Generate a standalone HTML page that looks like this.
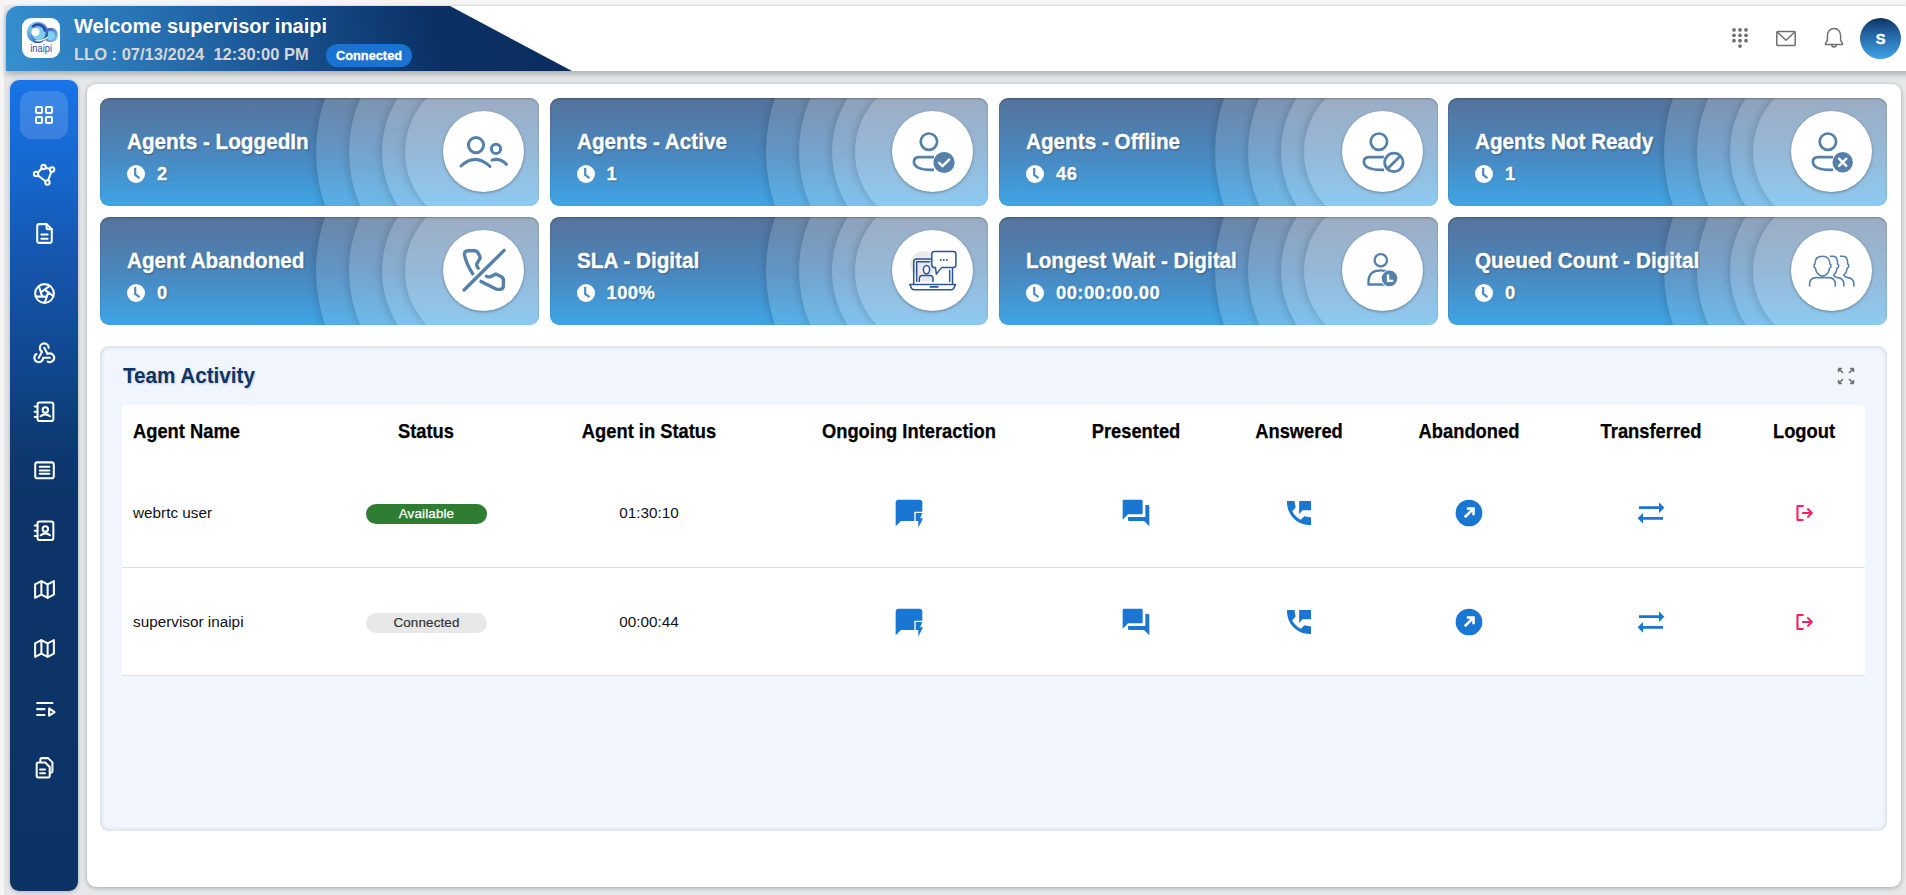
<!DOCTYPE html>
<html><head><meta charset="utf-8"><title>Dashboard</title>
<style>
*{box-sizing:border-box;margin:0;padding:0}
html,body{width:1906px;height:895px;overflow:hidden}
body{background:#f5f5f5;font-family:"Liberation Sans",sans-serif;position:relative}
.shell{position:absolute;left:6px;top:6px;width:1910px;height:900px;background:#e7e8ea;box-shadow:-1px 0 2px rgba(0,0,0,.12)}
.topbar{position:absolute;left:6px;top:6px;width:1910px;height:65px;background:#fff;border-top-left-radius:12px;border-top-right-radius:12px;box-shadow:0 3px 6px rgba(0,0,0,.28)}
.hdr{position:absolute;left:0;top:0;width:566px;height:65px;border-top-left-radius:12px;
 background:linear-gradient(78deg,#3690d0 0%,#2873b4 25%,#17508f 50%,#0b3164 75%,#0a2d5e 100%);
 clip-path:polygon(0 0,444px 0,566px 65px,0 65px)}
.logo{position:absolute;left:16px;top:12px;width:38px;height:40px;background:#fff;border-radius:9px}
.welcome{position:absolute;left:68px;top:8px;color:#fff;font-weight:bold;font-size:20px;line-height:24px;white-space:nowrap;text-shadow:0 0 1px rgba(0,0,0,.2)}
.llo{position:absolute;left:68px;top:38px;color:#d6d6d6;font-weight:bold;font-size:16.5px;line-height:20px;white-space:nowrap}
.conn{position:absolute;left:320px;top:38px;width:86px;height:23px;border-radius:12px;background:#1a73d0;color:#fff;font-weight:bold;font-size:12.8px;line-height:24.5px;text-align:center;-webkit-text-stroke:.3px #fff}
.ticons{position:absolute;left:0;top:0}
.avatar{position:absolute;left:1860px;top:18px;width:41px;height:41px;border-radius:50%;background:linear-gradient(180deg,#0d3466 0%,#2a70b0 50%,#3ea3e6 100%);color:#fff;font-weight:bold;font-size:14.5px;line-height:42px;text-align:center;-webkit-text-stroke:0.5px #fff}
.sidebar{position:absolute;left:10px;top:80px;width:68px;height:811px;border-radius:9px;background:linear-gradient(180deg,#1874e8 0%,#1666cc 12%,#1556ae 22%,#114a93 33%,#0d3b74 44%,#0c3468 52%,#0b3366 100%);box-shadow:0 1px 4px rgba(0,0,0,.25)}
.sb-active{position:absolute;left:10px;top:11px;width:48px;height:48px;border-radius:12px;background:rgba(255,255,255,.15)}
.sbi{position:absolute;left:22px;width:24px;height:24px}
.main{position:absolute;left:87px;top:84px;width:1814px;height:803px;background:#fff;border-radius:9px;box-shadow:0 1px 5px rgba(0,0,0,.3)}
.card{position:absolute;width:438.5px;height:108px;border-radius:9px;overflow:hidden;
 background:linear-gradient(180deg,#55739a 0%,#4a86bd 50%,#3ea5e6 100%)}
.card::after{content:"";position:absolute;inset:0;border-radius:9px;box-shadow:inset 0 1px 2px rgba(0,0,0,.25);pointer-events:none}
.ring{position:absolute;border-radius:50%;background:rgba(255,255,255,.13);box-shadow:-3px 0 6px rgba(0,0,0,.12)}
.ic{position:absolute;width:81px;height:81px;border-radius:50%;background:#fff;box-shadow:0 1px 3px rgba(0,0,0,.35)}
.ic svg{position:absolute;left:0;top:0}
.ctitle{position:absolute;left:27px;top:31.5px;color:#fff;font-weight:bold;font-size:22.5px;line-height:26px;transform:scaleX(.92);-webkit-text-stroke:.35px #fff;transform-origin:0 0;white-space:nowrap;text-shadow:1px 1px 2px rgba(0,0,0,.35)}
.cval{position:absolute;left:27px;top:65px;height:22px;color:#fff;font-weight:bold;font-size:18.4px;letter-spacing:.45px;-webkit-text-stroke:.3px #fff;line-height:22px;white-space:nowrap;text-shadow:1px 1px 2px rgba(0,0,0,.3)}
.cval svg{position:absolute;left:0;top:2px}
.cval span{position:absolute;left:30px;top:0}
.panel{position:absolute;left:13px;top:262px;width:1787px;height:485px;background:#f1f5fd;border-radius:9px;box-shadow:inset 0 0 5px rgba(0,0,0,.17)}
.ptitle{position:absolute;left:23px;top:17px;color:#0d3566;font-weight:bold;font-size:21.5px;line-height:26px;transform:scaleX(.96);transform-origin:0 0;text-shadow:1px 1px 2px rgba(0,0,0,.2)}
.tbl{position:absolute;left:22px;top:59px;width:1743px;height:271px;background:#fff}
.th{position:absolute;font-weight:bold;font-size:19.3px;line-height:22px;transform:scaleX(.95);-webkit-text-stroke:.25px #000;color:#000;white-space:nowrap;text-align:center;width:240px}
.td{position:absolute;font-size:15.3px;line-height:20px;color:#111;white-space:nowrap;text-align:center;width:240px}
.hr{position:absolute;left:0;width:1743px;height:1px;background:#e0e0e0}
.badge{position:absolute;width:121px;height:20px;border-radius:10px;font-size:13.4px;line-height:20px;text-align:center}
.avail{background:#2e7d32;color:#fff;-webkit-text-stroke:.25px #fff;letter-spacing:.15px}
.connb{background:#e8e8e8;color:#333;-webkit-text-stroke:.2px #333;letter-spacing:.15px}
.ti{position:absolute;width:32px;height:32px}

</style></head><body>
<div class="shell"></div>
<div class="topbar">
 <div class="hdr">
  <div class="logo"><svg width="38" height="40" viewBox="0 0 38 40">
<defs><linearGradient id="lga" x1="0.1" y1="0.1" x2="0.9" y2="0.9"><stop offset="0" stop-color="#8ad8f0"/><stop offset="0.5" stop-color="#4f8fd4"/><stop offset="1" stop-color="#2b3aa2"/></linearGradient>
<linearGradient id="lgb" x1="0" y1="0" x2="1" y2="1"><stop offset="0" stop-color="#2f46aa"/><stop offset="1" stop-color="#86d4ef"/></linearGradient></defs>
<circle cx="28.6" cy="17" r="7.3" fill="url(#lgb)"/>
<circle cx="28.4" cy="17.6" r="4.6" fill="#7fd0ee"/>
<circle cx="15.5" cy="14.4" r="10.7" fill="url(#lga)"/>
<circle cx="17" cy="15.6" r="6.6" fill="#7ccfe9"/>
<path d="M10.2 9 A7.2 7.2 0 0 1 22.8 13.5" stroke="#3040a6" stroke-width="2.4" fill="none"/>
<circle cx="13.4" cy="14" r="4.1" fill="#fff"/>
<path d="M13.5 22.3 Q20 24.2 25.5 19.2" stroke="#fff" stroke-width="1.1" fill="none"/>
<text x="8.2" y="33.7" font-family="Liberation Sans" font-size="11.5" fill="#3a46a2" textLength="21.8" lengthAdjust="spacingAndGlyphs">inaipi</text>
</svg></div>
  <div class="welcome">Welcome supervisor inaipi</div>
  <div class="llo">LLO : 07/13/2024&nbsp;&nbsp;12:30:00 PM</div>
  <div class="conn">Connected</div>
 </div>
</div>
<div class="ticons"><svg style="position:absolute;left:1732px;top:28.1px" width="17" height="21" viewBox="0 0 17 21"><g fill="#6f6f6f"><circle cx="2" cy="1.9" r="1.85"/><circle cx="8" cy="1.9" r="1.85"/><circle cx="14" cy="1.9" r="1.85"/><circle cx="2" cy="7.3" r="1.85"/><circle cx="8" cy="7.3" r="1.85"/><circle cx="14" cy="7.3" r="1.85"/><circle cx="2" cy="12.7" r="1.85"/><circle cx="8" cy="12.7" r="1.85"/><circle cx="14" cy="12.7" r="1.85"/><circle cx="8" cy="18.1" r="1.85"/></g></svg>
<svg style="position:absolute;left:1775px;top:29.5px" width="22" height="18" viewBox="0 0 22 18"><rect x="1.8" y="1.6" width="18.4" height="14" rx="0.8" fill="none" stroke="#707070" stroke-width="1.5"/><path d="M2.2 2 L11 10.2 L19.8 2" fill="none" stroke="#707070" stroke-width="1.5"/></svg>
<svg style="position:absolute;left:1823px;top:27px" width="22" height="22" viewBox="0 0 22 22"><path d="M3.2 17.6 H18.8 c.7 0 1 -.7 .6 -1.3 L17.6 13.2 V8.4 c0 -4 -2.8 -7 -6.6 -7 S4.4 4.4 4.4 8.4 V13.2 L2.6 16.3 c-.4 .6 -.1 1.3 .6 1.3z" fill="none" stroke="#707070" stroke-width="1.5" stroke-linejoin="round"/><path d="M8.8 17.8 a2.2 2.2 0 0 0 4.4 0" fill="none" stroke="#707070" stroke-width="1.5"/></svg>
<div class="avatar">S</div></div>
<div class="sidebar">
 <div class="sb-active"></div>
 <svg class="sbi" style="top:23.30px;left:22.30px;width:24px;height:24px" viewBox="0 0 24 24" fill="none" stroke="#fff" stroke-width="1.95" stroke-linecap="round" stroke-linejoin="round"><rect x="4" y="4" width="6" height="6" rx="1"/><rect x="14" y="4" width="6" height="6" rx="1"/><rect x="4" y="14" width="6" height="6" rx="1"/><rect x="14" y="14" width="6" height="6" rx="1"/></svg><svg class="sbi" style="top:82.07px;left:21.80px;width:25px;height:25px" viewBox="0 0 24 24" fill="none" stroke="#fff" stroke-width="1.95" stroke-linecap="round" stroke-linejoin="round"><circle cx="11.1" cy="4.8" r="2.1"/><circle cx="19.3" cy="7.2" r="2.1"/><circle cx="3.9" cy="11.5" r="2.1"/><circle cx="14.8" cy="19.7" r="2.1"/><path d="M5.6 10l3.8 -3.7M13.1 5.5l4.2 1.2M18.6 9.2l-3.1 8.5M13 18.5l-7.3 -5.6"/></svg><svg class="sbi" style="top:141.34px;left:21.80px;width:25px;height:25px" viewBox="0 0 24 24" fill="none" stroke="#fff" stroke-width="1.95" stroke-linecap="round" stroke-linejoin="round"><path d="M14 3v4a1 1 0 0 0 1 1h4"/><path d="M17 21h-10a2 2 0 0 1 -2 -2v-14a2 2 0 0 1 2 -2h7l5 5v11a2 2 0 0 1 -2 2z"/><path d="M9 13h6M9 17h6"/></svg><svg class="sbi" style="top:200.61px;left:21.80px;width:25px;height:25px" viewBox="0 0 24 24" fill="none" stroke="#fff" stroke-width="1.95" stroke-linecap="round" stroke-linejoin="round"><circle cx="12" cy="12" r="9"/><path d="M3.6 15h10.55M6.551 4.938l3.26 10.034M17.032 4.636l-8.535 6.201M20.559 14.51l-8.535 -6.201M12.257 20.916l3.261 -10.034"/></svg><svg class="sbi" style="top:259.13px;left:21.05px;width:26.5px;height:26.5px" viewBox="0 0 24 24" fill="none" stroke="#fff" stroke-width="1.95" stroke-linecap="round" stroke-linejoin="round"><path d="M4.876 13.61a4 4 0 1 0 6.124 3.39h6"/><path d="M15.066 20.502a4 4 0 1 0 1.934 -7.502c-.706 0 -1.424 .179 -2 .5l-3 -5.5"/><path d="M16 8a4 4 0 1 0 -8 0c0 1.506 .77 2.818 2 3.5l-3 5.5"/></svg><svg class="sbi" style="top:319.15px;left:21.80px;width:25px;height:25px" viewBox="0 0 24 24" fill="none" stroke="#fff" stroke-width="1.95" stroke-linecap="round" stroke-linejoin="round"><rect x="5.3" y="3.3" width="15.2" height="17.8" rx="2"/><path d="M2.6 7.3h2.6M2.6 12.2h2.6M2.6 17.3h2.6"/><circle cx="12.8" cy="10.6" r="2.6"/><path d="M8.3 16.6q4.5 -3.6 9 0"/></svg><svg class="sbi" style="top:378.42px;left:21.80px;width:25px;height:25px" viewBox="0 0 24 24" fill="none" stroke="#fff" stroke-width="1.95" stroke-linecap="round" stroke-linejoin="round"><rect x="3.1" y="4.2" width="17.8" height="15.2" rx="2"/><path d="M7.4 8.5h9.3M7.4 11.9h9.3M7.4 15.2h9.3"/></svg><svg class="sbi" style="top:437.69px;left:21.80px;width:25px;height:25px" viewBox="0 0 24 24" fill="none" stroke="#fff" stroke-width="1.95" stroke-linecap="round" stroke-linejoin="round"><rect x="5.3" y="3.3" width="15.2" height="17.8" rx="2"/><path d="M2.6 7.3h2.6M2.6 12.2h2.6M2.6 17.3h2.6"/><circle cx="12.8" cy="10.6" r="2.6"/><path d="M8.3 16.6q4.5 -3.6 9 0"/></svg><svg class="sbi" style="top:496.96px;left:21.80px;width:25px;height:25px" viewBox="0 0 24 24" fill="none" stroke="#fff" stroke-width="1.95" stroke-linecap="round" stroke-linejoin="round"><path d="M3 7l6 -3l6 3l6 -3v13l-6 3l-6 -3l-6 3v-13"/><path d="M9 4v13M15 7v13"/></svg><svg class="sbi" style="top:556.23px;left:21.80px;width:25px;height:25px" viewBox="0 0 24 24" fill="none" stroke="#fff" stroke-width="1.95" stroke-linecap="round" stroke-linejoin="round"><path d="M3 7l6 -3l6 3l6 -3v13l-6 3l-6 -3l-6 3v-13"/><path d="M9 4v13M15 7v13"/></svg><svg class="sbi" style="top:615.50px;left:21.80px;width:25px;height:25px" viewBox="0 0 24 24" fill="none" stroke="#fff" stroke-width="1.95" stroke-linecap="round" stroke-linejoin="round"><path d="M4.9 6.8h14.8M4.9 12.6h7.1M4.9 18.2h7.1"/><path d="M16.4 11.9l5.3 3.5l-5.3 3.5z"/></svg><svg class="sbi" style="top:674.77px;left:21.80px;width:25px;height:25px" viewBox="0 0 24 24" fill="none" stroke="#fff" stroke-width="1.95" stroke-linecap="round" stroke-linejoin="round"><path d="M8 6.8V4.5a1.5 1.5 0 0 1 1.5 -1.5H15.5L19.6 7.1V15.6a1.5 1.5 0 0 1 -1.5 1.5H17.3"/><path d="M6 7.2H12.7L17 11.5V20a1.5 1.5 0 0 1 -1.5 1.5H6a1.5 1.5 0 0 1 -1.5 -1.5V8.7a1.5 1.5 0 0 1 1.5 -1.5z"/><path d="M7.8 14h4.7M7.8 17.6h4.7"/></svg>
</div>
<div class="main">
 <div class="card" style="left:13px;top:13.5px"><div class="ring" style="left:216.0px;top:-113px;width:334px;height:334px"></div><div class="ring" style="left:249.0px;top:-80px;width:268px;height:268px"></div><div class="ring" style="left:282.0px;top:-47px;width:202px;height:202px"></div><div class="ring" style="left:305.0px;top:-24px;width:156px;height:156px"></div><div class="ic" style="left:342.5px;top:13.5px"><svg width="81" height="81" viewBox="-40.5 -40.5 81 81"><g fill="none" stroke="#5580aa" stroke-width="3" stroke-linecap="round"><circle cx="-7.5" cy="-6.4" r="7.6"/><circle cx="12.5" cy="-2.6" r="4.6"/><path d="M-22.5 14.5 Q-8 1 6.5 15"/><path d="M8.5 8.6 Q16 6 23 12.8"/></g></svg></div><div class="ctitle">Agents - LoggedIn</div><div class="cval"><svg width="18" height="18" viewBox="0 0 18 18"><circle cx="9" cy="9" r="9" fill="#fff"/><path d="M8.2 4.2 V10 L11.6 12.4" fill="none" stroke="#4a8ac2" stroke-width="2.2" stroke-linecap="square"/></svg><span>2</span></div></div><div class="card" style="left:462.5px;top:13.5px"><div class="ring" style="left:216.0px;top:-113px;width:334px;height:334px"></div><div class="ring" style="left:249.0px;top:-80px;width:268px;height:268px"></div><div class="ring" style="left:282.0px;top:-47px;width:202px;height:202px"></div><div class="ring" style="left:305.0px;top:-24px;width:156px;height:156px"></div><div class="ic" style="left:342.5px;top:13.5px"><svg width="81" height="81" viewBox="-40.5 -40.5 81 81"><circle cx="-3.6" cy="-9.8" r="8.2" fill="none" stroke="#5580aa" stroke-width="2.7"/><path d="M1.5 5.6 H-13.5 C-17.3 5.6 -18.6 8 -18.6 10.6 C-18.6 15.6 -11.5 18.4 -2 18.4 H1.5" fill="none" stroke="#5580aa" stroke-width="2.7"/><circle cx="11.6" cy="11" r="11.2" fill="#fff"/><circle cx="11.6" cy="11" r="10.6" fill="#5580aa"/><path d="M6.6 11.3l3.4 3.4 6.6 -6.6" fill="none" stroke="#fff" stroke-width="2.4" stroke-linecap="round" stroke-linejoin="round"/></svg></div><div class="ctitle">Agents - Active</div><div class="cval"><svg width="18" height="18" viewBox="0 0 18 18"><circle cx="9" cy="9" r="9" fill="#fff"/><path d="M8.2 4.2 V10 L11.6 12.4" fill="none" stroke="#4a8ac2" stroke-width="2.2" stroke-linecap="square"/></svg><span>1</span></div></div><div class="card" style="left:912px;top:13.5px"><div class="ring" style="left:216.0px;top:-113px;width:334px;height:334px"></div><div class="ring" style="left:249.0px;top:-80px;width:268px;height:268px"></div><div class="ring" style="left:282.0px;top:-47px;width:202px;height:202px"></div><div class="ring" style="left:305.0px;top:-24px;width:156px;height:156px"></div><div class="ic" style="left:342.5px;top:13.5px"><svg width="81" height="81" viewBox="-40.5 -40.5 81 81"><circle cx="-3.6" cy="-9.8" r="8.2" fill="none" stroke="#5580aa" stroke-width="2.7"/><path d="M1.5 5.6 H-13.5 C-17.3 5.6 -18.6 8 -18.6 10.6 C-18.6 15.6 -11.5 18.4 -2 18.4 H1.5" fill="none" stroke="#5580aa" stroke-width="2.7"/><circle cx="11.4" cy="10.9" r="11.2" fill="#fff"/><circle cx="11.4" cy="10.9" r="9.2" fill="none" stroke="#5580aa" stroke-width="2.8"/><path d="M5 17.3 L17.8 4.5" stroke="#5580aa" stroke-width="2.8"/></svg></div><div class="ctitle">Agents - Offline</div><div class="cval"><svg width="18" height="18" viewBox="0 0 18 18"><circle cx="9" cy="9" r="9" fill="#fff"/><path d="M8.2 4.2 V10 L11.6 12.4" fill="none" stroke="#4a8ac2" stroke-width="2.2" stroke-linecap="square"/></svg><span>46</span></div></div><div class="card" style="left:1361px;top:13.5px"><div class="ring" style="left:216.0px;top:-113px;width:334px;height:334px"></div><div class="ring" style="left:249.0px;top:-80px;width:268px;height:268px"></div><div class="ring" style="left:282.0px;top:-47px;width:202px;height:202px"></div><div class="ring" style="left:305.0px;top:-24px;width:156px;height:156px"></div><div class="ic" style="left:342.5px;top:13.5px"><svg width="81" height="81" viewBox="-40.5 -40.5 81 81"><circle cx="-3.6" cy="-9.8" r="8.2" fill="none" stroke="#5580aa" stroke-width="2.7"/><path d="M1.5 5.6 H-13.5 C-17.3 5.6 -18.6 8 -18.6 10.6 C-18.6 15.6 -11.5 18.4 -2 18.4 H1.5" fill="none" stroke="#5580aa" stroke-width="2.7"/><circle cx="11.2" cy="10.8" r="10.8" fill="#fff"/><circle cx="11.2" cy="10.8" r="10.2" fill="#5580aa"/><path d="M7.6 7.2l7.2 7.2M14.8 7.2l-7.2 7.2" stroke="#fff" stroke-width="2.4" stroke-linecap="round"/></svg></div><div class="ctitle">Agents Not Ready</div><div class="cval"><svg width="18" height="18" viewBox="0 0 18 18"><circle cx="9" cy="9" r="9" fill="#fff"/><path d="M8.2 4.2 V10 L11.6 12.4" fill="none" stroke="#4a8ac2" stroke-width="2.2" stroke-linecap="square"/></svg><span>1</span></div></div><div class="card" style="left:13px;top:132.5px"><div class="ring" style="left:216.0px;top:-113px;width:334px;height:334px"></div><div class="ring" style="left:249.0px;top:-80px;width:268px;height:268px"></div><div class="ring" style="left:282.0px;top:-47px;width:202px;height:202px"></div><div class="ring" style="left:305.0px;top:-24px;width:156px;height:156px"></div><div class="ic" style="left:342.5px;top:13.5px"><svg width="81" height="81" viewBox="-40.5 -40.5 81 81"><g fill="none" stroke="#5580aa" stroke-width="3.4" stroke-linecap="round" stroke-linejoin="round"><path d="M-19.4 19.5 L20.6 -20.1"/><path d="M-5.3 -2.3 Q-7.5 -5 -6.5 -7 L-3.6 -12 Q-3 -13 -4 -15 L-6 -18.5 Q-7 -19.8 -9 -19.8 H-15.5 Q-19.5 -19.5 -19 -15.5 Q-17 -6 -10.8 3.2"/><path d="M3 5.7 Q5 6.8 7 6.2 L12.3 3.5 L17.5 6 Q19.8 7.2 19.9 9.5 V15.5 Q19.8 19 16.3 18.9 Q14 18.9 12 18.3 L-2.5 10.9"/></g></svg></div><div class="ctitle">Agent Abandoned</div><div class="cval"><svg width="18" height="18" viewBox="0 0 18 18"><circle cx="9" cy="9" r="9" fill="#fff"/><path d="M8.2 4.2 V10 L11.6 12.4" fill="none" stroke="#4a8ac2" stroke-width="2.2" stroke-linecap="square"/></svg><span>0</span></div></div><div class="card" style="left:462.5px;top:132.5px"><div class="ring" style="left:216.0px;top:-113px;width:334px;height:334px"></div><div class="ring" style="left:249.0px;top:-80px;width:268px;height:268px"></div><div class="ring" style="left:282.0px;top:-47px;width:202px;height:202px"></div><div class="ring" style="left:305.0px;top:-24px;width:156px;height:156px"></div><div class="ic" style="left:342.5px;top:13.5px"><svg width="81" height="81" viewBox="-40.5 -40.5 81 81"><circle cx="-9.2" cy="-6.2" r="13" fill="#e8e9eb"/><g fill="none" stroke="#2b5592" stroke-width="1.5" stroke-linejoin="round" stroke-linecap="round"><path d="M-18.8 13.9 V-8.5 a3 3 0 0 1 3 -3 H-1.2"/><path d="M-15.8 11.1 V-8.7 H-2.9"/><path d="M20 13.9 V-2.9"/><path d="M17.2 11.1 V-0.1"/><path d="M-13.2 11.1 V8 a3 3 0 0 1 3 -3 h7.7 a3 3 0 0 1 3 3 V11.1" fill="#e8e9eb"/><ellipse cx="-6" cy="-0.9" rx="3.1" ry="4.2" fill="#fff"/><path d="M-22.7 13.9 H23.1 L21.5 17.4 Q20.7 19.2 18.9 19.2 H-18.6 Q-20.4 19.2 -21.2 17.4 Z" fill="#fff"/><path d="M-2.1 16.4 H5.2" stroke-width="1.8"/><path d="M1.8 -19.1 H20.9 a2.5 2.5 0 0 1 2.5 2.5 V-5.4 a2.5 2.5 0 0 1 -2.5 2.5 H9.1 L3.8 3.6 L3 -2.9 H1.8 a2.5 2.5 0 0 1 -2.5 -2.5 V-16.6 a2.5 2.5 0 0 1 2.5 -2.5 Z" fill="#fff"/></g><g fill="#2b5592"><circle cx="8.3" cy="-10.5" r="0.95"/><circle cx="11.3" cy="-10.5" r="0.95"/><circle cx="14.4" cy="-10.5" r="0.95"/></g></svg></div><div class="ctitle">SLA - Digital</div><div class="cval"><svg width="18" height="18" viewBox="0 0 18 18"><circle cx="9" cy="9" r="9" fill="#fff"/><path d="M8.2 4.2 V10 L11.6 12.4" fill="none" stroke="#4a8ac2" stroke-width="2.2" stroke-linecap="square"/></svg><span>100%</span></div></div><div class="card" style="left:912px;top:132.5px"><div class="ring" style="left:216.0px;top:-113px;width:334px;height:334px"></div><div class="ring" style="left:249.0px;top:-80px;width:268px;height:268px"></div><div class="ring" style="left:282.0px;top:-47px;width:202px;height:202px"></div><div class="ring" style="left:305.0px;top:-24px;width:156px;height:156px"></div><div class="ic" style="left:342.5px;top:13.5px"><svg width="81" height="81" viewBox="-40.5 -40.5 81 81"><g fill="none" stroke="#5580aa" stroke-width="2.3"><circle cx="-1.7" cy="-10.2" r="6.2"/><path d="M6 1.6 Q2.5 -0.2 -2 -0.2 Q-14 0 -14 11 V14 H3"/></g><circle cx="7" cy="7.9" r="8.6" fill="#fff"/><circle cx="7" cy="7.9" r="7.8" fill="#5580aa"/><path d="M5.6 4.1 V10.4 H10.7" fill="none" stroke="#fff" stroke-width="2.4"/></svg></div><div class="ctitle">Longest Wait - Digital</div><div class="cval"><svg width="18" height="18" viewBox="0 0 18 18"><circle cx="9" cy="9" r="9" fill="#fff"/><path d="M8.2 4.2 V10 L11.6 12.4" fill="none" stroke="#4a8ac2" stroke-width="2.2" stroke-linecap="square"/></svg><span>00:00:00.00</span></div></div><div class="card" style="left:1361px;top:132.5px"><div class="ring" style="left:216.0px;top:-113px;width:334px;height:334px"></div><div class="ring" style="left:249.0px;top:-80px;width:268px;height:268px"></div><div class="ring" style="left:282.0px;top:-47px;width:202px;height:202px"></div><div class="ring" style="left:305.0px;top:-24px;width:156px;height:156px"></div><div class="ic" style="left:342.5px;top:13.5px"><svg width="81" height="81" viewBox="-40.5 -40.5 81 81"><g fill="none" stroke="#5580aa" stroke-width="1.6" stroke-linecap="round" stroke-linejoin="round"><path d="M-21.9 15.5 v-2.4 a6 6 0 0 1 6 -6 h13.7 a6 6 0 0 1 6 6 v2.4"/><path d="M-9 5.6 c-4 0 -6.6 -4 -7.1 -8 c-1.6 -.2 -2.1 -3.6 -.4 -4.2 c0 -5 3 -7.6 7.5 -7.6 c4.5 0 7.5 2.6 7.5 7.6 c1.7 .6 1.2 4 -.4 4.2 c-.5 4 -3.1 8 -7.1 8z"/><path d="M-1 -14.2 h2.5 c3.2 0 4.6 3 4.6 7.6 c1.7 .6 1.2 4 -.4 4.2 c-.5 3.2 -1.8 5.6 -3.6 7.2 c.9 1.2 2.4 2.3 4.2 2.3 a6 6 0 0 1 6 6 v2.4"/><path d="M9.1 -14.2 h2.5 c3.2 0 4.6 3 4.6 7.6 c1.7 .6 1.2 4 -.4 4.2 c-.5 3.2 -1.8 5.6 -3.6 7.2 c.9 1.2 2.4 2.3 4.2 2.3 a6 6 0 0 1 6 6 v2.4"/></g></svg></div><div class="ctitle">Queued Count - Digital</div><div class="cval"><svg width="18" height="18" viewBox="0 0 18 18"><circle cx="9" cy="9" r="9" fill="#fff"/><path d="M8.2 4.2 V10 L11.6 12.4" fill="none" stroke="#4a8ac2" stroke-width="2.2" stroke-linecap="square"/></svg><span>0</span></div></div>
 <div class="panel">
  <div class="ptitle">Team Activity</div>
  <svg style="position:absolute;left:1737px;top:21px" width="18" height="18" viewBox="0 0 18 18"><g fill="none" stroke="#6d6d6d" stroke-width="1.5"><path d="M1.5 1.5 L6 6 M1.5 1.5 H5 M1.5 1.5 V5"/><path d="M16.5 1.5 L12 6 M16.5 1.5 H13 M16.5 1.5 V5"/><path d="M1.5 16.5 L6 12 M1.5 16.5 H5 M1.5 16.5 V13"/><path d="M16.5 16.5 L12 12 M16.5 16.5 H13 M16.5 16.5 V13"/></g></svg>
  <div class="tbl"><div class="th" style="left:11px;top:16px;text-align:left;transform-origin:0 0">Agent Name</div><div class="th" style="left:184px;top:16px">Status</div><div class="th" style="left:407px;top:16px">Agent in Status</div><div class="th" style="left:667px;top:16px">Ongoing Interaction</div><div class="th" style="left:894px;top:16px">Presented</div><div class="th" style="left:1057px;top:16px">Answered</div><div class="th" style="left:1227px;top:16px">Abandoned</div><div class="th" style="left:1409px;top:16px">Transferred</div><div class="th" style="left:1562px;top:16px">Logout</div><div class="td" style="left:11px;top:98px;text-align:left">webrtc user</div><div class="badge avail" style="left:244px;top:99px">Available</div><div class="td" style="left:407px;top:98px">01:30:10</div><svg class="ti" style="left:771px;top:92px" viewBox="0 0 24 24"><path fill="#1976d2" d="M22 4c0-1.1-.9-2-2-2H4C2.9 2 2.01 2.9 2.01 4L2 22l4-4h10v-7h6V4z"/><path fill="#1976d2" d="M22.5 16h-2.2l1.7-4h-5v6h2v5z"/></svg><svg class="ti" style="left:998px;top:92px" viewBox="0 0 24 24"><path fill="#1976d2" d="M21 6h-2v9H6v2c0 .55.45 1 1 1h11l4 4V7c0-.55-.45-1-1-1zm-4 6V3c0-.55-.45-1-1-1H3c-.55 0-1 .45-1 1v14l4-4h10c.55 0 1-.45 1-1z"/></svg><svg class="ti" style="left:1161px;top:92px" viewBox="0 0 24 24"><path fill="#1976d2" d="M3 3h5.6l.9 4.9-2.6 2.7c1.4 2.8 3.7 5.1 6.5 6.5l2.6-2.6 5 .9V21h-1C10.6 21 3 13.4 3 4z"/><path fill="#1976d2" d="M12.1 3H21v6.9h-6.3l-2.6 2.9z"/></svg><svg class="ti" style="left:1331px;top:92px" viewBox="0 0 24 24"><circle cx="12" cy="12" r="10" fill="#1976d2"/><path d="M8.8 15.2 L15.2 8.8 M10.4 8.6 H15.4 V13.6" fill="none" stroke="#fff" stroke-width="1.9"/></svg><svg class="ti" style="left:1513px;top:92px" viewBox="0 0 24 24"><path fill="#1976d2" d="M22 8l-4-4v3H3v2h15v3l4-4zM2 16l4 4v-3h15v-2H6v-3l-4 4z"/></svg><svg class="ti" style="left:1666px;top:92px" viewBox="0 0 24 24"><g fill="none" stroke="#ff1f5a" stroke-width="1.55" stroke-linecap="round" stroke-linejoin="round"><path d="M11.1 6.7 H7.1 V17.3 H11.1"/><path d="M11.2 12 H17.9 M15 9.1 L17.9 12 L15 14.9"/></g></svg><div class="td" style="left:11px;top:207px;text-align:left">supervisor inaipi</div><div class="badge connb" style="left:244px;top:208px">Connected</div><div class="td" style="left:407px;top:207px">00:00:44</div><svg class="ti" style="left:771px;top:201px" viewBox="0 0 24 24"><path fill="#1976d2" d="M22 4c0-1.1-.9-2-2-2H4C2.9 2 2.01 2.9 2.01 4L2 22l4-4h10v-7h6V4z"/><path fill="#1976d2" d="M22.5 16h-2.2l1.7-4h-5v6h2v5z"/></svg><svg class="ti" style="left:998px;top:201px" viewBox="0 0 24 24"><path fill="#1976d2" d="M21 6h-2v9H6v2c0 .55.45 1 1 1h11l4 4V7c0-.55-.45-1-1-1zm-4 6V3c0-.55-.45-1-1-1H3c-.55 0-1 .45-1 1v14l4-4h10c.55 0 1-.45 1-1z"/></svg><svg class="ti" style="left:1161px;top:201px" viewBox="0 0 24 24"><path fill="#1976d2" d="M3 3h5.6l.9 4.9-2.6 2.7c1.4 2.8 3.7 5.1 6.5 6.5l2.6-2.6 5 .9V21h-1C10.6 21 3 13.4 3 4z"/><path fill="#1976d2" d="M12.1 3H21v6.9h-6.3l-2.6 2.9z"/></svg><svg class="ti" style="left:1331px;top:201px" viewBox="0 0 24 24"><circle cx="12" cy="12" r="10" fill="#1976d2"/><path d="M8.8 15.2 L15.2 8.8 M10.4 8.6 H15.4 V13.6" fill="none" stroke="#fff" stroke-width="1.9"/></svg><svg class="ti" style="left:1513px;top:201px" viewBox="0 0 24 24"><path fill="#1976d2" d="M22 8l-4-4v3H3v2h15v3l4-4zM2 16l4 4v-3h15v-2H6v-3l-4 4z"/></svg><svg class="ti" style="left:1666px;top:201px" viewBox="0 0 24 24"><g fill="none" stroke="#ff1f5a" stroke-width="1.55" stroke-linecap="round" stroke-linejoin="round"><path d="M11.1 6.7 H7.1 V17.3 H11.1"/><path d="M11.2 12 H17.9 M15 9.1 L17.9 12 L15 14.9"/></g></svg><div class="hr" style="top:162px"></div><div class="hr" style="top:270px"></div></div>
 </div>
</div>
</body></html>
